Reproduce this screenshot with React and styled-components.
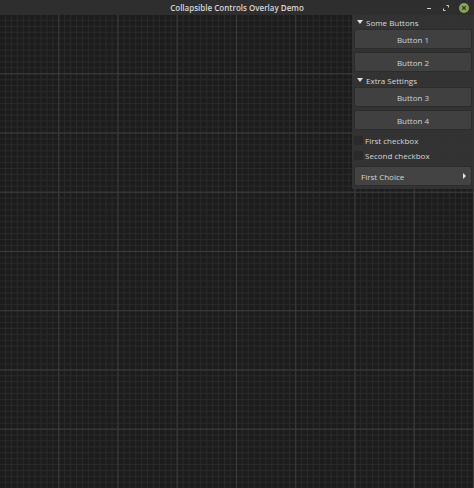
import React, { useState } from "react";
import styled, { createGlobalStyle } from "styled-components";

const GlobalStyle = createGlobalStyle`
  html, body, #root {
    margin: 0;
    padding: 0;
    height: 100%;
  }
  body {
    background: #1e1e1e;
    font-family: "Open Sans", "Noto Sans", sans-serif;
    overflow: hidden;
  }
`;

const Window = styled.div`
  display: flex;
  flex-direction: column;
  width: 474px;
  height: 488px;
`;

const TitleBar = styled.div`
  position: relative;
  height: 15px;
  flex: none;
  background: #2e2e2e;
  display: flex;
  align-items: center;
  justify-content: center;
  color: #d6d6d6;
  font-size: 8px;
  font-weight: 600;
`;

const Controls = styled.div`
  position: absolute;
  right: 5px;
  top: 0;
  height: 15px;
  display: flex;
  align-items: center;
  gap: 9px;
`;

const CloseDot = styled.div`
  width: 10px;
  height: 10px;
  border-radius: 50%;
  background: #87a556;
  display: flex;
  align-items: center;
  justify-content: center;
`;

// 8 major cells across, each split in 10
const Canvas = styled.div`
  position: relative;
  flex: 1;
  background-color: #1c1c1c;
  background-image:
    linear-gradient(to right, #3c3c3c 1px, transparent 1px),
    linear-gradient(to bottom, #3c3c3c 1px, transparent 1px),
    linear-gradient(to right, #2a2a2a 1px, transparent 1px),
    linear-gradient(to bottom, #2a2a2a 1px, transparent 1px);
  background-size: 59.25px 59.25px, 59.25px 59.25px, 5.925px 5.925px,
    5.925px 5.925px;
  background-position: -1px -1px;
`;

const Panel = styled.div`
  position: absolute;
  top: 0;
  right: 0;
  width: 122px;
  padding: 0 2px 3px;
  box-sizing: border-box;
  background: rgba(52, 52, 52, 0.97);
  display: flex;
  flex-direction: column;
`;

const Header = styled.div`
  height: 14px;
  display: flex;
  align-items: center;
  gap: 3px;
  padding-left: 3px;
  color: #dadada;
  font-size: 8px;
  cursor: pointer;
`;

const Arrow = styled.span`
  width: 0;
  height: 0;
  border-left: 3px solid transparent;
  border-right: 3px solid transparent;
  border-top: 4px solid #e0e0e0;
  transform: ${({ open }) => (open ? "none" : "rotate(-90deg)")};
`;

const Group = styled.div`
  display: flex;
  flex-direction: column;
  gap: 3px;
  margin-bottom: 1px;
`;

const Button = styled.button`
  height: 20px;
  width: 100%;
  margin: 0;
  border: 1px solid #2c2c2c;
  border-radius: 2px;
  background: #404040;
  color: #d4d4d4;
  font-family: "Open Sans", "Noto Sans", sans-serif;
  font-size: 8px;
  padding: 0;
`;

const CheckRow = styled.label`
  height: 15px;
  display: flex;
  align-items: center;
  gap: 2px;
  color: #d4d4d4;
  font-size: 8px;
`;

const Box = styled.span`
  width: 9px;
  height: 9px;
  background: ${({ checked }) => (checked ? "#6a8fbf" : "#2a2a2a")};
  border-radius: 1px;
`;

const Select = styled.div`
  margin-top: 2px;
  height: 18px;
  display: flex;
  align-items: center;
  justify-content: space-between;
  padding: 0 5px 0 6px;
  background: #434343;
  border: 1px solid #2c2c2c;
  border-radius: 2px;
  color: #d8d8d8;
  font-size: 8px;
`;

const Caret = styled.span`
  width: 0;
  height: 0;
  border-top: 3px solid transparent;
  border-bottom: 3px solid transparent;
  border-left: 3px solid #e6e6e6;
`;

function Section({ title, children }) {
  const [open, setOpen] = useState(true);
  return (
    <>
      <Header onClick={() => setOpen(!open)}>
        <Arrow open={open} />
        {title}
      </Header>
      {open && <Group>{children}</Group>}
    </>
  );
}

function Check({ label }) {
  const [checked, setChecked] = useState(false);
  return (
    <CheckRow onClick={() => setChecked(!checked)}>
      <Box checked={checked} />
      {label}
    </CheckRow>
  );
}

export default function App() {
  return (
    <Window>
      <GlobalStyle />
      <TitleBar>
        Collapsible Controls Overlay Demo
        <Controls>
          <svg width="8" height="8" viewBox="0 0 8 8">
            <path d="M2 4.5h4" stroke="#cfcfcf" strokeWidth="1" />
          </svg>
          <svg width="8" height="8" viewBox="0 0 8 8">
            <path d="M4.5 1.5h2v2M3.5 6.5h-2v-2" stroke="#cfcfcf" strokeWidth="1" fill="none" />
          </svg>
          <CloseDot>
            <svg width="6" height="6" viewBox="0 0 6 6">
              <path d="M1.2 1.2l3.6 3.6M4.8 1.2l-3.6 3.6" stroke="#2e2e2e" strokeWidth="1.2" />
            </svg>
          </CloseDot>
        </Controls>
      </TitleBar>
      <Canvas>
        <Panel>
          <Section title="Some Buttons">
            <Button>Button 1</Button>
            <Button>Button 2</Button>
          </Section>
          <Section title="Extra Settings">
            <Button>Button 3</Button>
            <Button>Button 4</Button>
            <div>
              <Check label="First checkbox" />
              <Check label="Second checkbox" />
            </div>
          </Section>
          <Select>
            First Choice
            <Caret />
          </Select>
        </Panel>
      </Canvas>
    </Window>
  );
}
